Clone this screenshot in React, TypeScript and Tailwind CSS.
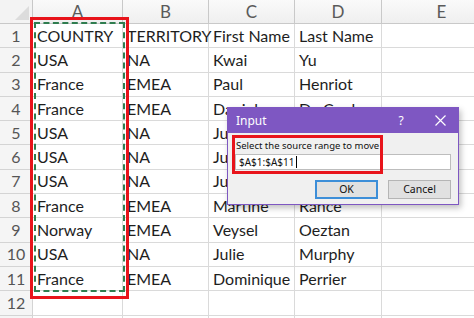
import React from "react";

const cols = ["A", "B", "C", "D", "E"];
const widths = ["w-[90px]", "w-[86px]", "w-[86px]", "w-[87px]", "w-[120px]"];
const rows: string[][] = [
  ["COUNTRY", "TERRITORY", "First Name", "Last Name", ""],
  ["USA", "NA", "Kwai", "Yu", ""],
  ["France", "EMEA", "Paul", "Henriot", ""],
  ["France", "EMEA", "Daniel", "Da Cunha", ""],
  ["USA", "NA", "Julie", "Young", ""],
  ["USA", "NA", "Julie", "Brown", ""],
  ["USA", "NA", "Julie", "King", ""],
  ["France", "EMEA", "Martine", "Rance", ""],
  ["Norway", "EMEA", "Veysel", "Oeztan", ""],
  ["USA", "NA", "Julie", "Murphy", ""],
  ["France", "EMEA", "Dominique", "Perrier", ""],
  ["", "", "", "", ""],
];

export default function App() {
  return (
    <div className="relative w-[474px] h-[318px] overflow-hidden bg-white" style={{ fontFamily: "Lato, 'Open Sans', sans-serif" }}>
      {/* header row */}
      <div className="flex h-[24px]">
        <div className="relative w-[33px] shrink-0 bg-[#f3f3f3] border-r border-b border-[#c8c8c8]">
          <div className="absolute right-[3px] bottom-[3px] w-0 h-0 border-l-[14px] border-l-transparent border-b-[14px] border-b-[#dcdcdc]" />
        </div>
        {cols.map((c, i) => (
          <div
            key={c}
            className={`${widths[i]} shrink-0 flex items-center justify-center bg-gradient-to-b from-[#fafafa] to-[#efefef] border-r border-b border-[#c9c9c9] text-[17px] text-[#5a5a5a]`}
          >
            {c}
          </div>
        ))}
      </div>
      {rows.map((r, ri) => (
        <div key={ri} className="flex h-[24.3px]">
          <div className="w-[33px] shrink-0 flex items-center justify-center bg-[#f5f5f5] border-r border-b border-[#d4d4d4] text-[16px] text-[#555]">
            {ri + 1}
          </div>
          {r.map((v, ci) => (
            <div
              key={ci}
              className={`${widths[ci]} shrink-0 flex items-center pl-[4px] border-r border-b border-[#dadada] text-[16px] text-[#1e1e1e] whitespace-nowrap`}
            >
              {v}
            </div>
          ))}
        </div>
      ))}
      <div className="flex h-[24px]">
        <div className="w-[33px] shrink-0 bg-[#f5f5f5] border-r border-[#d4d4d4]" />
        {widths.map((w, ci) => (
          <div key={ci} className={`${w} shrink-0 border-r border-[#dadada]`} />
        ))}
      </div>

      {/* green marching ants */}
      <div className="absolute left-[34px] top-[22px] w-[91px] h-[270px] border-2 border-dashed border-[#2f7d4f]" />
      {/* red highlight */}
      <div className="absolute left-[30px] top-[17px] w-[99px] h-[282px] border-[3px] border-[#e8141b]" />

      {/* dialog */}
      <div
        className="absolute left-[227px] top-[107px] w-[232px] h-[98px] bg-[#f0f0f0] border border-[#7e57c2] shadow-[2px_3px_6px_rgba(0,0,0,0.25)] flex flex-col"
        style={{ fontFamily: "'Noto Sans', 'Open Sans', sans-serif" }}
      >
        <div className="h-[25px] bg-[#7e57c2] flex items-center pl-[8px] pr-[12px] text-white text-[12px]">
          <span className="flex-1">Input</span>
          <span className="w-[12px] text-center mr-[28px] text-[12px]">?</span>
          <svg width="11" height="11" viewBox="0 0 11 11">
            <path d="M0.5 0.5 L10.5 10.5 M10.5 0.5 L0.5 10.5" stroke="white" strokeWidth="1.2" />
          </svg>
        </div>
        <div className="relative flex-1 px-[7px] pt-[6px]">
          <div className="text-[9.5px] text-[#111] leading-[13px] pl-[1px]">Select the source range to move</div>
          <div className="mt-[2px] h-[16px] bg-white border border-[#bdbdbd] flex items-center pl-[3px] text-[10px] text-[#111]">
            $A$1:$A$11<span className="inline-block w-px h-[12px] bg-black ml-[1px]" />
          </div>
          <div className="flex justify-end gap-[10px] mt-[10px]">
            <div className="w-[63px] h-[19px] bg-[#e1e1e1] border-2 border-[#3c8ed8] flex items-center justify-center text-[10.5px] text-[#111]">OK</div>
            <div className="w-[63px] h-[19px] bg-[#e1e1e1] border border-[#b5b5b5] flex items-center justify-center text-[10.5px] text-[#111]">Cancel</div>
          </div>
          <div className="absolute left-[4px] top-[2px] w-[151px] h-[39px] border-[3px] border-[#e8141b]" />
        </div>
      </div>
    </div>
  );
}
